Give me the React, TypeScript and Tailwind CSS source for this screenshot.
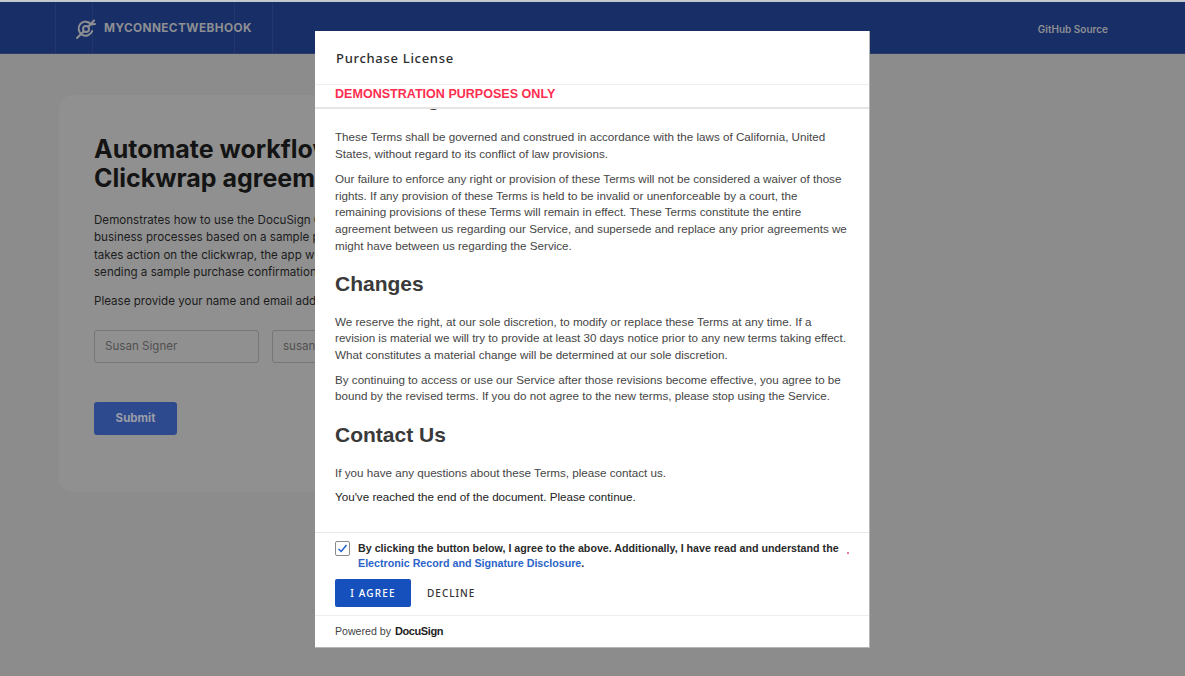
const sans = "font-['Liberation_Sans',Arial,sans-serif]";

// faint column lines in the header
const headerLines = ['left-[55px]', 'left-[92px]', 'left-[234px]', 'left-[272px]'];

function Logo() {
  return (
    <svg width="20" height="20" viewBox="0 0 20 20" fill="none" stroke="#8d8f93" strokeWidth="2" strokeLinecap="round" className="shrink-0">
      <path d="M15.2 5.4a7 7 0 1 0 1 6.6" />
      <circle cx="10" cy="10" r="3" />
      <path d="M1 19 L7.8 12.2 M12.2 7.8 L18 1.5 M14.6 5.6 L19 5" />
    </svg>
  );
}

function Background() {
  return (
    <div className="h-[676px] w-[1185px] overflow-hidden bg-[#8c8c8c] font-['Inter',sans-serif]">
      <div className="h-[2px] bg-[#c4c8d0]" />
      <header className="relative flex h-[52px] items-center justify-between border-b border-[#2c3d69] bg-[#182e66] pl-[76px] pr-[77px] pt-[3px]">
        {headerLines.map((l) => (
          <div key={l} className={`absolute top-0 h-full w-px bg-[#22376c] ${l}`} />
        ))}
        <div className="relative flex items-center gap-[8px]">
          <Logo />
          <span className="text-[11.8px] font-bold tracking-[0.4px] text-[#8d8f93]">MYCONNECTWEBHOOK</span>
        </div>
        <span className="text-[10px] font-semibold text-[#8d8f93]">GitHub Source</span>
      </header>
      <div className="ml-[59px] mt-[41px] h-[397px] w-[560px] rounded-[14px] bg-[#909090] pl-[35px] pt-[40px]">
        <h1 className="whitespace-nowrap text-[25px] font-bold leading-[29px] text-[#141414]">
          Automate workflows with
          <br />
          Clickwrap agreements
        </h1>
        <div className="mt-[19px] whitespace-nowrap text-[11.6px] leading-[17.3px] text-[#1c1c1c]">
          <p>Demonstrates how to use the DocuSign Click API to</p>
          <p>business processes based on a sample purchase</p>
          <p>takes action on the clickwrap, the app will trigger</p>
          <p>sending a sample purchase confirmation email</p>
        </div>
        <p className="mt-[12px] whitespace-nowrap text-[11.6px] leading-[17px] text-[#1c1c1c]">Please provide your name and email address</p>
        <div className="mt-[20px] flex gap-[13px]">
          <div className="flex h-[33px] w-[165px] items-center rounded-[3px] border border-[#767676] pl-[10px] text-[11.6px] text-[#505050]">Susan Signer</div>
          <div className="flex h-[33px] w-[165px] items-center rounded-[3px] border border-[#767676] pl-[10px] text-[11.6px] text-[#505050]">susan@example.com</div>
        </div>
        <div className="mt-[39px] flex h-[33px] w-[83px] items-center justify-center rounded-[3px] bg-[#2e4a8e] text-[11.5px] font-bold text-[#9a9ea8]">Submit</div>
      </div>
    </div>
  );
}

function Modal() {
  return (
    <div className={`absolute left-[315px] top-[31px] flex h-[617px] w-[555px] flex-col border-b border-r border-[#b5b5b5] bg-white text-[#454545] ${sans}`}>
      <div className="flex h-[54px] shrink-0 items-center border-b border-[#eeeeee] pl-[21px] pt-[2px] font-['Noto_Sans',sans-serif] text-[13px] font-medium tracking-[0.7px] text-[#2e2e2e]">
        Purchase License
      </div>
      <div className="flex h-[24px] shrink-0 items-center border-b-2 border-[#e6e6e6] pb-[4px] pl-[20px] text-[12.55px] font-bold text-[#ff2d4f]">
        DEMONSTRATION PURPOSES ONLY
      </div>
      <div className="min-h-0 flex-1 overflow-hidden pl-[20px] pr-[20px] text-[11.65px] leading-[16.7px]">
        <h2 className="mt-[-22px] text-[21px] font-bold leading-[24px] text-[#3a3a3a]">Governing Law</h2>
        <p className="mt-[18px]">
          These Terms shall be governed and construed in accordance with the laws of California, United
          <br />
          States, without regard to its conflict of law provisions.
        </p>
        <p className="mt-[8.6px]">
          Our failure to enforce any right or provision of these Terms will not be considered a waiver of those
          <br />
          rights. If any provision of these Terms is held to be invalid or unenforceable by a court, the
          <br />
          remaining provisions of these Terms will remain in effect. These Terms constitute the entire
          <br />
          agreement between us regarding our Service, and supersede and replace any prior agreements we
          <br />
          might have between us regarding the Service.
        </p>
        <h2 className="mt-[17px] text-[21px] font-bold leading-[24px] text-[#3a3a3a]">Changes</h2>
        <p className="mt-[18px]">
          We reserve the right, at our sole discretion, to modify or replace these Terms at any time. If a
          <br />
          revision is material we will try to provide at least 30 days notice prior to any new terms taking effect.
          <br />
          What constitutes a material change will be determined at our sole discretion.
        </p>
        <p className="mt-[8px]">
          By continuing to access or use our Service after those revisions become effective, you agree to be
          <br />
          bound by the revised terms. If you do not agree to the new terms, please stop using the Service.
        </p>
        <h2 className="mt-[18px] text-[21px] font-bold leading-[24px] text-[#3a3a3a]">Contact Us</h2>
        <p className="mt-[18px]">If you have any questions about these Terms, please contact us.</p>
        <p className="mt-[7.6px] text-[#222]">You've reached the end of the document. Please continue.</p>
      </div>
      <div className="h-[83px] shrink-0 border-t border-[#e8e8e8] pl-[20px]">
        <div className="flex pt-[8px]">
          <div className="flex h-[15px] w-[15px] shrink-0 items-center justify-center rounded-[2px] border border-[#8a8a8a]">
            <svg width="11" height="11" viewBox="0 0 11 11" fill="none" stroke="#1f5fd0" strokeWidth="1.5">
              <path d="M1.5 6 L4.2 8.5 L9.5 2" />
            </svg>
          </div>
          <div className="relative ml-[8px] text-[10.7px] font-bold leading-[15px] text-[#2a2a2a]">
            <p className="whitespace-nowrap">By clicking the button below, I agree to the above. Additionally, I have read and understand the</p>
            <p className="whitespace-nowrap">
              <span className="text-[#2b64c8]">Electronic Record and Signature Disclosure</span>.
            </p>
            <div className="absolute left-[489px] top-[11px] h-[2px] w-[2px] rounded-full bg-[#e8506a]" />
          </div>
        </div>
        <div className="mt-[8px] flex items-center">
          <div className="flex h-[28px] w-[76px] items-center justify-center rounded-[2px] bg-[#1650bc] font-['Noto_Sans',sans-serif] text-[10px] font-medium tracking-[1.2px] text-white">I AGREE</div>
          <div className="ml-[16px] font-['Noto_Sans',sans-serif] text-[10px] font-medium tracking-[1px] text-[#333]">DECLINE</div>
        </div>
      </div>
      <div className="flex h-[32px] shrink-0 items-center border-t border-[#eeeeee] pl-[20px] text-[10.6px] text-[#444]">
        Powered by
        <span className="ml-[4px] text-[11px] font-bold tracking-[-0.4px] text-[#1e1e1e]">DocuSign</span>
      </div>
    </div>
  );
}

export default function App() {
  return (
    <div className="relative h-[676px] w-[1185px] overflow-hidden">
      <Background />
      <Modal />
    </div>
  );
}
